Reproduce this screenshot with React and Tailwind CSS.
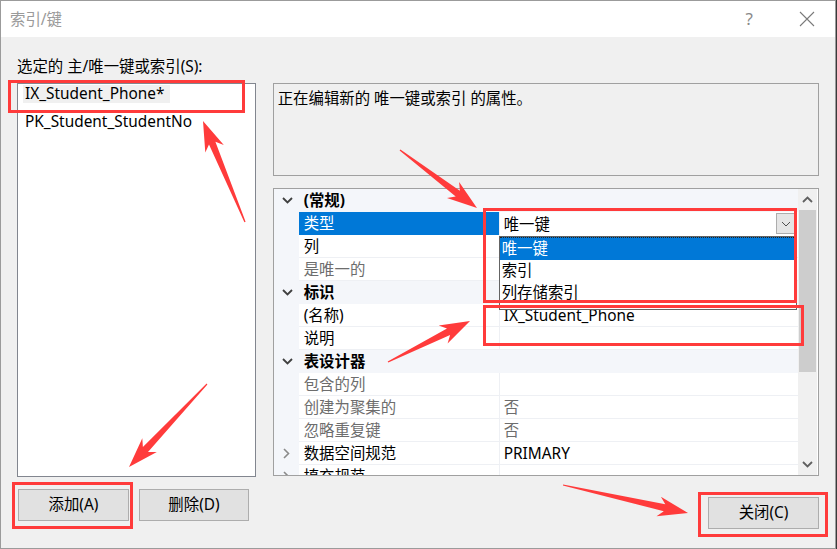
import React from "react";

const FONT = { fontFamily: '"Noto Sans", "Noto Sans CJK SC", sans-serif' };

function ChevronDown({ color = "#404040" }) {
  return (
    <svg width="11" height="7" viewBox="0 0 11 7">
      <path d="M1 1 L5.5 5.5 L10 1" fill="none" stroke={color} strokeWidth="1.8" />
    </svg>
  );
}
function ChevronRight({ color = "#8a8a8a" }) {
  return (
    <svg width="7" height="11" viewBox="0 0 7 11">
      <path d="M1 1 L5.5 5.5 L1 10" fill="none" stroke={color} strokeWidth="1.6" />
    </svg>
  );
}

function arrowPoints(x1, y1, x2, y2, L = 30, W = 20, w1 = 7, w0 = 1.2) {
  const dx = x2 - x1;
  const dy = y2 - y1;
  const len = Math.hypot(dx, dy);
  const ux = dx / len;
  const uy = dy / len;
  const nx = -uy;
  const ny = ux;
  const bx = x2 - ux * L;
  const by = y2 - uy * L;
  const nb = x2 - ux * (L - 6);
  const nby = y2 - uy * (L - 6);
  const p = [
    [x1 + (nx * w0) / 2, y1 + (ny * w0) / 2],
    [nb + (nx * w1) / 2, nby + (ny * w1) / 2],
    [bx + (nx * W) / 2, by + (ny * W) / 2],
    [x2, y2],
    [bx - (nx * W) / 2, by - (ny * W) / 2],
    [nb - (nx * w1) / 2, nby - (ny * w1) / 2],
    [x1 - (nx * w0) / 2, y1 - (ny * w0) / 2],
  ];
  return p.map((q) => q.map((v) => v.toFixed(1)).join(",")).join(" ");
}

const rows = [
  { cat: true, label: "(常规)" },
  { label: "类型", selected: true, combo: true },
  { label: "列" },
  { label: "是唯一的", grey: true },
  { cat: true, label: "标识" },
  { label: "(名称)", value: "IX_Student_Phone" },
  { label: "说明" },
  { cat: true, label: "表设计器" },
  { label: "包含的列", grey: true },
  { label: "创建为聚集的", grey: true, value: "否", vgrey: true },
  { label: "忽略重复键", grey: true, value: "否", vgrey: true },
  { label: "数据空间规范", expand: true, value: "PRIMARY" },
  { label: "填充规范", expand: true },
];

function PropRow({ r }) {
  if (r.cat) {
    return (
      <div className="flex h-[23px] bg-[#f4f6fa] items-center shrink-0">
        <div className="w-[25px] flex justify-center items-center pl-[2px]">
          <ChevronDown />
        </div>
        <div className="pl-[5px] pt-[1px] font-bold text-black leading-none">{r.label}</div>
      </div>
    );
  }
  return (
    <div className="flex h-[23px] shrink-0">
      <div className="w-[25px] bg-[#f4f6fa] flex justify-center items-center pl-[1px]">
        {r.expand && <ChevronRight />}
      </div>
      <div
        className={
          "w-[200px] pl-[5px] pt-[2px] flex items-center border-b " +
          (r.selected
            ? "bg-[#0078d7] text-white border-[#0078d7]"
            : "bg-white border-[#eef0f4] " + (r.grey ? "text-[#6d6d6d]" : "text-black"))
        }
      >
        {r.label}
      </div>
      <div
        className={
          "flex-1 flex items-center border-l border-[#eef0f4] bg-white " +
          (r.combo ? "" : "border-b pl-[4px] pt-[2px]") +
          (r.vgrey ? " text-[#6d6d6d]" : " text-black")
        }
      >
        {r.combo ? (
          <div className="flex w-full h-full items-center pl-[4px] pr-[2px]">
            <span className="flex-1 pt-[2px]">唯一键</span>
            <div className="w-[20px] h-[21px] border border-[#adadad] bg-[#e5e5e5] flex items-center justify-center">
              <svg width="10" height="6" viewBox="0 0 10 6">
                <path d="M1 1 L5 5 L9 1" fill="none" stroke="#505050" strokeWidth="1" />
              </svg>
            </div>
          </div>
        ) : (
          r.value
        )}
      </div>
    </div>
  );
}

export default function App() {
  const arrows = [
    [245, 222, 203, 121],
    [400, 150, 477, 208],
    [388, 362, 470, 321],
    [207, 384, 129, 467],
    [563, 485, 688, 513],
  ];
  return (
    <div className="w-[837px] h-[549px] bg-[#3a3a3a] relative overflow-hidden" style={FONT}>
      <div className="w-[836px] h-[549px] border border-[#9b9b9b] flex flex-col bg-[#f0f0f0] text-[15.4px] text-black">
        {/* title bar */}
        <div className="h-[36px] bg-white flex items-center shrink-0">
          <div className="pl-[9px] pt-[1px] text-[#9a9a9a] flex-1">索引/键</div>
          <div className="text-[#8a8a8a] text-[17px] mr-[46px]">?</div>
          <div className="mr-[20px]">
            <svg width="16" height="16" viewBox="0 0 16 16">
              <path d="M1 1 L15 15 M15 1 L1 15" stroke="#7a7a7a" strokeWidth="1.1" />
            </svg>
          </div>
        </div>
        {/* body */}
        <div className="flex-1 flex flex-col px-[16px] pt-[20px]">
          <div className="h-[20px] leading-[20px] mb-[6px]">选定的 主/唯一键或索引(S):</div>
          <div className="flex gap-[17px]">
            {/* left column */}
            <div className="w-[239px] flex flex-col">
              <div className="h-[394px] border border-[#82868f] bg-white pt-[1px] pl-[5px]">
                <div className="h-[18px] leading-[18px] bg-[#f0f0f0] w-fit pr-[6px] pl-[2px]">IX_Student_Phone*</div>
                <div className="h-[19px] leading-[19px] pl-[2px] mt-[9px]">PK_Student_StudentNo</div>
              </div>
              <div className="flex gap-[10px] mt-[12px] pl-[1px]">
                <button className="w-[111px] h-[32px] bg-[#e1e1e1] border border-[#adadad] flex items-center justify-center">
                  添加(A)
                </button>
                <button className="w-[110px] h-[32px] bg-[#e1e1e1] border border-[#adadad] flex items-center justify-center">
                  删除(D)
                </button>
              </div>
            </div>
            {/* right column */}
            <div className="w-[547px] flex flex-col">
              <div className="h-[93px] border border-[#a0a0a0] bg-[#f0f0f0] pl-[4px] pt-[3px]">
                正在编辑新的 唯一键或索引 的属性。
              </div>
              <div className="h-[288px] mt-[12px] border border-[#a0a0a0] bg-white flex relative overflow-hidden">
                <div className="flex-1 flex flex-col overflow-hidden">
                  {rows.map((r, i) => (
                    <PropRow key={i} r={r} />
                  ))}
                </div>
                {/* scrollbar */}
                <div className="w-[19px] bg-[#f0f0f0] flex flex-col mr-[1px]">
                  <div className="h-[21px] flex items-center justify-center">
                    <svg width="11" height="7" viewBox="0 0 11 7">
                      <path d="M1 6 L5.5 1.5 L10 6" fill="none" stroke="#606060" strokeWidth="1.8" />
                    </svg>
                  </div>
                  <div className="h-[162px] mx-[1px] bg-[#cdcdcd]" />
                  <div className="flex-1" />
                  <div className="h-[21px] flex items-center justify-center">
                    <ChevronDown color="#606060" />
                  </div>
                </div>
                {/* dropdown list */}
                <div className="absolute left-[225px] top-[47px] w-[298px] h-[74px] border border-[#646464] bg-white flex flex-col">
                  <div className="h-[23px] bg-[#0078d7] text-white pl-[2px] flex items-center border-t border-dotted border-[#222]">
                    唯一键
                  </div>
                  <div className="h-[22px] pl-[2px] flex items-center">索引</div>
                  <div className="h-[22px] pl-[2px] flex items-center">列存储索引</div>
                </div>
              </div>
              <div className="flex justify-end mt-[21px]">
                <button className="w-[111px] h-[32px] bg-[#e1e1e1] border border-[#adadad] flex items-center justify-center">
                  关闭(C)
                </button>
              </div>
            </div>
          </div>
        </div>
      </div>

      {/* annotations */}
      <div className="absolute inset-0 pointer-events-none">
        <div className="absolute left-[8px] top-[80px] w-[237px] h-[33px] border-[3px] border-[#ff3b3b]" />
        <div className="absolute left-[483px] top-[208px] w-[314px] h-[95px] border-[3px] border-[#ff3b3b]" />
        <div className="absolute left-[483px] top-[305px] w-[321px] h-[41px] border-[3px] border-[#ff3b3b]" />
        <div className="absolute left-[12px] top-[482px] w-[121px] h-[47px] border-[3px] border-[#ff3b3b]" />
        <div className="absolute left-[698px] top-[492px] w-[130px] h-[45px] border-[3px] border-[#ff3b3b]" />
        <svg className="absolute inset-0" width="837" height="549" viewBox="0 0 837 549">
          {arrows.map((a, i) => (
            <polygon key={i} points={arrowPoints(...a)} fill="#ff3b3b" />
          ))}
        </svg>
      </div>
    </div>
  );
}
